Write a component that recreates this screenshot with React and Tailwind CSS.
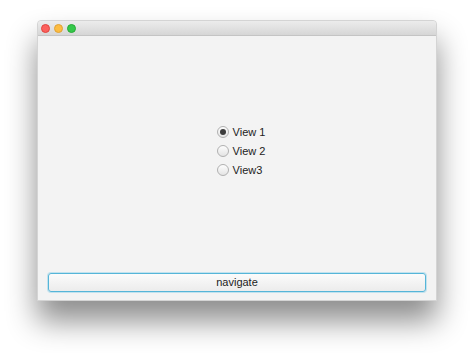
import React, { useState } from 'react'

const views = ['View 1', 'View 2', 'View3']

const App = () => {
  const [selected, setSelected] = useState(0)

  return (
    <div className="w-[474px] h-[353px] bg-white pt-[20px] pl-[37px]" style={{ fontFamily: '"Liberation Sans", Arial, sans-serif' }}>
      <div className="w-[400px] h-[281px] flex flex-col bg-[#f3f3f3] rounded-t-[4px] shadow-[0_20px_30px_rgba(0,0,0,0.45)] border border-[#d4d4d4]">
        {/* title bar */}
        <div className="h-[15px] flex items-center gap-[4px] px-[3px] bg-gradient-to-b from-[#ececec] to-[#d6d6d6] border-b border-[#c4c4c4] rounded-t-[4px]">
          <span className="w-[9px] h-[9px] rounded-full bg-[#fc605c] border border-[#e0443e]" />
          <span className="w-[9px] h-[9px] rounded-full bg-[#fdbc40] border border-[#dea236]" />
          <span className="w-[9px] h-[9px] rounded-full bg-[#34c84a] border border-[#27aa35]" />
        </div>

        {/* radios */}
        <div className="flex-1 flex items-center justify-center">
          <div className="flex flex-col gap-[7px] ml-[8px] mb-[3px]">
            {views.map((v, i) => (
              <label key={v} className="flex items-center gap-[4px] h-[12px] cursor-default" onClick={() => setSelected(i)}>
                <span className="w-[12px] h-[12px] rounded-full border border-[#b0b0b0] bg-gradient-to-b from-[#fdfdfd] to-[#e4e4e4] flex items-center justify-center">
                  {selected === i && <span className="w-[6px] h-[6px] rounded-full bg-[#3c3c3c]" />}
                </span>
                <span className="text-[11px] text-[#222]">{v}</span>
              </label>
            ))}
          </div>
        </div>

        {/* button */}
        <div className="px-[10px] pb-[7px]">
          <button className="w-full h-[19px] rounded-[3px] border-[1.5px] border-[#55b5d8] bg-gradient-to-b from-[#fbfbfb] to-[#ececec] text-[11px] text-[#222] leading-none shadow-[0_0_0_1px_rgba(120,200,230,0.4)]">
            navigate
          </button>
        </div>
      </div>
    </div>
  )
}

export default App
